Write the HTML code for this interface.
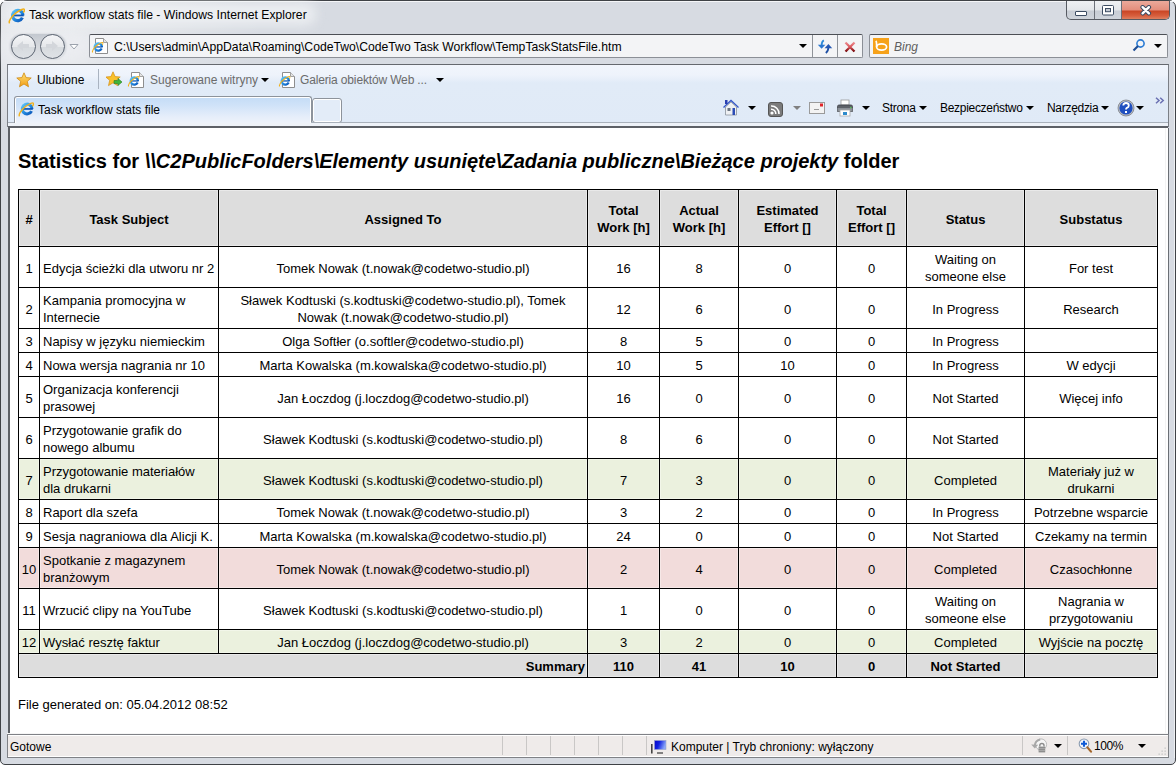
<!DOCTYPE html>
<html><head><meta charset="utf-8"><title>Task workflow stats file</title>
<style>
html,body{margin:0;padding:0;width:1176px;height:765px;overflow:hidden;background:#fff;}
body{position:relative;font-family:"Liberation Sans",sans-serif;font-size:12px;color:#000;}
.a{position:absolute;}
.t{position:absolute;white-space:nowrap;line-height:14px;}
#frame{position:absolute;left:0;top:0;width:1174px;height:763px;border:1px solid #3f4246;border-radius:7px 7px 5px 5px;
 background:radial-gradient(ellipse 220px 90px at 40px 35px,#e9ebee 0%,rgba(233,235,238,0.6) 50%,rgba(233,235,238,0) 100%),#d7dbe2;}
#frame::before{content:"";position:absolute;left:0;top:0;right:0;height:1px;background:#f5f6f8;border-radius:7px 7px 0 0;}
.cap{position:absolute;top:1px;height:18px;}
#content{position:absolute;left:10px;top:128px;width:1158px;height:605px;background:#fff;overflow:hidden;}
.c{position:absolute;white-space:nowrap;display:flex;align-items:center;justify-content:center;text-align:center;font-size:13px;line-height:17px;box-sizing:border-box;padding:0 3px;}
.c span{display:block;position:relative;top:1px;}
.c.l{justify-content:flex-start;text-align:left;padding-left:3px;}
.c.r{justify-content:flex-end;text-align:right;padding-right:2px;}
.c.b{font-weight:bold;}
.c.sh{box-shadow:inset 0 0 0 1px rgba(255,255,255,0.35);}
.gl{position:absolute;background:#000;}
.tri{position:absolute;width:0;height:0;border-left:4px solid transparent;border-right:4px solid transparent;border-top:4px solid #000;}
</style></head><body>
<div id="frame"></div>
<svg width="0" height="0" style="position:absolute">
<defs>
 <linearGradient id="eg" x1="0" y1="0" x2="1" y2="1"><stop offset="0" stop-color="#62c6f7"/><stop offset="0.55" stop-color="#2188de"/><stop offset="1" stop-color="#0b55b8"/></linearGradient>
 <symbol id="ie" viewBox="0 0 16 16">
   <path d="M13.54 10.07A4.9 4.9 0 1 1 14.0 8.0" stroke="url(#eg)" stroke-width="3" fill="none"/>
   <rect x="5.2" y="7.1" width="9.6" height="1.7" fill="#0e56b5"/>
   <path d="M1.6 15.3C0.1 14.0 2.9 9.0 7.9 5.3 11.9 2.4 14.9 1.2 15.4 2.4 15.7 3.1 15.2 4.2 14.4 5.2" fill="none" stroke="#f1b11a" stroke-width="1.4"/>
 </symbol>
 <symbol id="iepage" viewBox="0 0 17 17">
   <path d="M4.5 1.5H12.5L16.5 5.5V16.5H4.5Z" fill="#fff" stroke="#8e8e8e"/>
   <path d="M12.5 1.5V5.5H16.5" fill="#e4e4e4" stroke="#8e8e8e" stroke-width="0.8"/>
   <use href="#ie" x="0.5" y="4" width="12" height="12"/>
 </symbol>
</defs></svg>

<div class="a" style="left:6px;top:3px;width:310px;height:22px;border-radius:11px;background:rgba(240,242,245,0.85);filter:blur(6px);"></div>
<div class="a" style="left:2px;top:28px;width:90px;height:36px;border-radius:18px;background:rgba(236,238,241,0.8);filter:blur(8px);"></div>

<!-- title bar -->
<svg class="a" style="left:8px;top:7px" width="17" height="17"><use href="#ie" width="17" height="17"/></svg>
<div class="t" style="left:29px;top:8px;font-size:12.2px;">Task workflow stats file - Windows Internet Explorer</div>

<!-- caption buttons -->
<div class="a" style="left:1066px;top:1px;width:102px;height:18px;border:1px solid #565a62;border-top:none;border-radius:0 0 5px 5px;overflow:hidden;background:linear-gradient(#eef0f3 0,#e3e6ea 9px,#c8cdd5 10px,#d0d5dc 19px);">
 <div class="a" style="left:27px;top:0;width:1px;height:19px;background:#6c7079;"></div>
 <div class="a" style="left:54px;top:0;width:1px;height:19px;background:#6c7079;"></div>
 <div class="a" style="left:55px;top:0;width:47px;height:19px;background:linear-gradient(#eba99b 0,#e48e7c 9px,#c94524 10px,#d8603f 15px,#e08a6a 19px);"></div>
 <div class="a" style="left:8px;top:10px;width:10px;height:3px;border:1px solid #3d4d63;background:#fff;border-radius:1px;"></div>
 <svg class="a" style="left:35px;top:4px" width="13" height="11" viewBox="0 0 13 11"><rect x="0.5" y="0.5" width="11" height="9.5" rx="1" fill="#fff" stroke="#3d4d63"/><rect x="3.5" y="3.5" width="5" height="3.2" fill="#c3c9d2" stroke="#3d4d63"/></svg>
 <svg class="a" style="left:73px;top:4px" width="12" height="11" viewBox="0 0 12 11"><path d="M2.6 2.2L8.9 8.3M8.9 2.2L2.6 8.3" stroke="#3d4d63" stroke-width="4.4" stroke-linecap="round"/><path d="M2.6 2.2L8.9 8.3M8.9 2.2L2.6 8.3" stroke="#fff" stroke-width="2.4" stroke-linecap="round"/></svg>
</div>

<!-- nav buttons -->
<div class="a" style="left:10px;top:34px;width:56px;height:25px;border-radius:12px;background:linear-gradient(#c3c8cf,#d6d9de 50%,#dfe2e6);box-shadow:0 0 2px #c0c4ca;"></div>
<div class="a" style="left:11px;top:34px;width:23px;height:23px;border-radius:50%;border:1px solid #5d6572;background:linear-gradient(#f4f5f7,#e6e8eb 50%,#d6dade 51%,#dfe2e6);"></div>
<div class="a" style="left:40px;top:34px;width:23px;height:23px;border-radius:50%;border:1px solid #5d6572;background:linear-gradient(#f4f5f7,#e6e8eb 50%,#d6dade 51%,#dfe2e6);"></div>
<svg class="a" style="left:14px;top:38px" width="18" height="16" viewBox="0 0 18 16"><path d="M3 8L9 3V6H15V10H9V13Z" fill="#d3d6db"/></svg>
<svg class="a" style="left:43px;top:38px" width="18" height="16" viewBox="0 0 18 16"><path d="M15 8L9 3V6H3V10H9V13Z" fill="#d3d6db"/></svg>
<svg class="a" style="left:69px;top:44px" width="10" height="6" viewBox="0 0 10 6"><path d="M1 0.5H9L5 5Z" fill="#fff" stroke="#9ca3ad" stroke-width="1"/></svg>

<!-- address box -->
<div class="a" style="left:89px;top:34px;width:772px;height:22px;border:1px solid #8b8f96;border-top-color:#4c4f55;border-radius:2px;background:#f3f4f6;"></div>
<div class="a" style="left:812px;top:35px;width:1px;height:22px;background:#8f9399;"></div>
<div class="a" style="left:837px;top:35px;width:1px;height:22px;background:#8f9399;"></div>
<svg class="a" style="left:91px;top:37px" width="17" height="17"><use href="#iepage" width="17" height="17"/></svg>
<div class="t" style="left:114px;top:40px;font-size:12.2px;">C:\Users\admin\AppData\Roaming\CodeTwo\CodeTwo Task Workflow\TempTaskStatsFile.htm</div>
<div class="tri" style="left:799px;top:44px;"></div>
<svg class="a" style="left:816px;top:38px" width="18" height="17" viewBox="0 0 18 17">
 <path d="M7.8 2.3Q5.6 3.6 5.6 7.6" fill="none" stroke="#2c8ad9" stroke-width="1.8"/>
 <path d="M1.8 6.8H9.4L5.6 10.8Z" fill="#2a76cf"/>
 <path d="M12.4 9.2Q12.4 13.2 9.8 15" fill="none" stroke="#1d4ea3" stroke-width="1.8"/>
 <path d="M8.6 10.2H16.2L12.4 6Z" fill="#2457b3"/>
</svg>
<svg class="a" style="left:844px;top:41px" width="12" height="12" viewBox="0 0 12 12"><defs><linearGradient id="xg" x1="0" y1="0" x2="0" y2="1"><stop offset="0" stop-color="#ec8a8e"/><stop offset="0.5" stop-color="#d9545a"/><stop offset="1" stop-color="#750508"/></linearGradient></defs><path d="M1.5 1.5L10.5 10.5M10.5 1.5L1.5 10.5" stroke="url(#xg)" stroke-width="2.3"/></svg>

<!-- search box -->
<div class="a" style="left:869px;top:34px;width:297px;height:22px;border:1px solid #8b8f96;border-top-color:#4c4f55;border-radius:2px;background:#f3f4f6;"></div>
<div class="a" style="left:873px;top:38px;width:16px;height:16px;background:#f6a21b;"></div>
<svg class="a" style="left:873px;top:38px" width="16" height="16" viewBox="0 0 16 16"><path d="M2.8 2.8Q3.6 3.6 3.6 6V9" fill="none" stroke="#fff" stroke-width="1.7"/><ellipse cx="8.6" cy="9" rx="5" ry="3.1" fill="none" stroke="#fff" stroke-width="1.7"/></svg>
<div class="t" style="left:894px;top:40px;font-size:12px;font-style:italic;color:#5f5f5f;">Bing</div>
<svg class="a" style="left:1132px;top:38px" width="14" height="14" viewBox="0 0 14 14"><circle cx="8.5" cy="5.5" r="3.6" fill="none" stroke="#2a7bd4" stroke-width="1.6"/><path d="M6 8L1.5 12.5" stroke="#1d4d94" stroke-width="2.2"/></svg>
<div class="tri" style="left:1154px;top:44px;"></div>

<!-- command bar -->
<div class="a" style="left:7px;top:64px;width:1160px;height:62px;border:1px solid #7b7f86;border-bottom:none;border-top-color:#65686e;background:linear-gradient(#f1f5fc 0,#eef3fb 10px,#e1ebf7 18px,#e0eaf7 100%);"></div>
<!-- favorites row -->
<svg class="a" style="left:16px;top:72px" width="16" height="16" viewBox="0 0 16 16"><defs><linearGradient id="sg" x1="0" y1="0" x2="0" y2="1"><stop offset="0" stop-color="#fde27a"/><stop offset="1" stop-color="#f39c12"/></linearGradient></defs><path d="M8 0.8L10.1 5.6 15.2 6 11.3 9.3 12.5 14.8 8 12 3.5 14.8 4.7 9.3 0.8 6 5.9 5.6Z" fill="url(#sg)" stroke="#d08a12" stroke-width="0.8" stroke-linejoin="round"/></svg>
<div class="t" style="left:37px;top:73px;font-size:12px;">Ulubione</div>
<div class="a" style="left:98px;top:69px;width:1px;height:20px;background:#a9b3c0;"></div>
<svg class="a" style="left:106px;top:71px" width="17" height="16" viewBox="0 0 17 16"><path d="M7 0.8L9.1 5.6 14.2 6 10.3 9.3 11.5 14.6 7 11.8 2.5 14.6 3.7 9.3 -0.2 6 4.9 5.6Z" fill="#f8c12c" stroke="#d58d10" stroke-width="0.7"/><path d="M8 9.5H12V7.5L16 11 12 14.5V12.5H8Z" fill="#3fb63a" stroke="#2a7d27" stroke-width="0.6"/></svg>
<svg class="a" style="left:127px;top:71px" width="17" height="17"><use href="#iepage" width="17" height="17"/></svg>
<div class="t" style="left:150px;top:73px;font-size:12px;color:#6b6b6b;">Sugerowane witryny</div>
<div class="tri" style="left:261px;top:78px;"></div>
<svg class="a" style="left:278px;top:71px" width="17" height="17"><use href="#iepage" width="17" height="17"/></svg>
<div class="t" style="left:300px;top:73px;font-size:12px;color:#6b6b6b;letter-spacing:-0.15px;">Galeria obiektów Web ...</div>
<div class="tri" style="left:436px;top:78px;"></div>

<!-- tabs -->
<div class="a" style="left:14px;top:96px;width:296px;height:27px;border:1px solid #8d939b;border-bottom:none;border-radius:3px 3px 0 0;background:linear-gradient(#c4dcf6 0,#cfe2f8 8px,#e6eefa 20px,#eff3fa 27px);box-shadow:inset 0 1px 0 #fff,inset 1px 0 0 #fff,inset -1px 0 0 #fff;"></div>
<svg class="a" style="left:18px;top:101px" width="16" height="16"><use href="#ie" width="16" height="16"/></svg>
<div class="t" style="left:38px;top:103px;font-size:12px;">Task workflow stats file</div>
<div class="a" style="left:312px;top:98px;width:28px;height:23px;border:1px solid #8d939b;border-radius:3px;background:#e3ecf8;box-shadow:inset 0 0 0 1px #fff;"></div>
<div class="a" style="left:8px;top:122px;width:6px;height:1px;background:#a9b1bb;"></div><div class="a" style="left:311px;top:122px;width:857px;height:1px;background:#a9b1bb;"></div>
<div class="a" style="left:8px;top:123px;width:1160px;height:3px;background:#eef2f8;"></div>
<div class="a" style="left:8px;top:126px;width:1160px;height:2px;background:#5d6066;"></div>

<!-- command icons -->
<svg class="a" style="left:722px;top:99px" width="18" height="17" viewBox="0 0 18 17">
 <path d="M1.5 8.5L9 1.5 16.5 8.5" fill="none" stroke="#3355c8" stroke-width="1.3"/>
 <path d="M3.5 8V16H14.5V8L9 3Z" fill="#eef0f3" stroke="#8a929c" stroke-width="0.8"/>
 <rect x="3" y="1" width="2.5" height="4" fill="#2a3fb0"/>
 <rect x="5.5" y="9" width="3" height="3" fill="#6a7482"/>
 <rect x="10.5" y="9" width="2.5" height="7" fill="#2b4cb5"/>
</svg>
<div class="tri" style="left:748px;top:106px;"></div>
<svg class="a" style="left:768px;top:102px" width="15" height="15" viewBox="0 0 15 15">
 <rect x="0.5" y="0.5" width="14" height="14" rx="2.5" fill="#7b7b7b" stroke="#555"/>
 <circle cx="4" cy="11" r="1.6" fill="#fff"/>
 <path d="M3 7.2A4.5 4.5 0 0 1 7.8 12M3 4A7.6 7.6 0 0 1 11 12" fill="none" stroke="#fff" stroke-width="1.6"/>
</svg>
<div class="tri" style="left:793px;top:106px;border-top-color:#808080;"></div>
<svg class="a" style="left:809px;top:102px" width="16" height="12" viewBox="0 0 16 12">
 <rect x="0.5" y="0.5" width="15" height="11" fill="#f3f3f3" stroke="#9a9a9a"/>
 <rect x="11" y="1.5" width="3" height="3" fill="#e0242a"/>
 <rect x="5" y="7" width="5" height="1" fill="#9a9a9a"/>
</svg>
<svg class="a" style="left:836px;top:99px" width="18" height="18" viewBox="0 0 18 18">
 <rect x="5" y="1" width="8" height="5" fill="#fff" stroke="#999" stroke-width="0.8"/>
 <path d="M1.5 7.5Q1.5 6 3 6H15Q16.5 6 16.5 7.5V12.5H1.5Z" fill="#5d6168" stroke="#3d4046" stroke-width="0.8"/>
 <rect x="1.5" y="9" width="15" height="3.5" fill="#8a8f96"/>
 <rect x="4" y="11" width="10" height="6" fill="#fff" stroke="#aaa" stroke-width="0.8"/>
 <rect x="7" y="13" width="4" height="3" fill="#2e8bcc"/>
 <rect x="14" y="8" width="1.5" height="1.2" fill="#4fc24a"/>
</svg>
<div class="tri" style="left:862px;top:106px;"></div>
<div class="t" style="left:882px;top:101px;font-size:12px;letter-spacing:-0.3px;">Strona</div>
<div class="tri" style="left:919px;top:106px;"></div>
<div class="t" style="left:940px;top:101px;font-size:12px;letter-spacing:-0.3px;">Bezpieczeństwo</div>
<div class="tri" style="left:1026px;top:106px;"></div>
<div class="t" style="left:1047px;top:101px;font-size:12px;letter-spacing:-0.3px;">Narzędzia</div>
<div class="tri" style="left:1101px;top:106px;"></div>
<svg class="a" style="left:1117px;top:99px" width="18" height="18" viewBox="0 0 18 18">
 <circle cx="9" cy="9" r="8" fill="#b9bcc2" stroke="#7b7f87" stroke-width="0.8"/>
 <circle cx="9" cy="9" r="6.6" fill="#1f4fc0"/>
 <path d="M6.3 6.6Q6.3 4 9 4 11.8 4 11.8 6.4 11.8 8 9.9 8.8 9 9.3 9 10.6" fill="none" stroke="#fff" stroke-width="1.8"/>
 <rect x="8" y="12" width="2" height="2" fill="#fff"/>
</svg>
<div class="tri" style="left:1136px;top:106px;"></div>
<svg class="a" style="left:1155px;top:97px" width="10" height="7" viewBox="0 0 10 7"><path d="M1 0.8L4 3.5 1 6.2M5.2 0.8L8.2 3.5 5.2 6.2" fill="none" stroke="#6a70b2" stroke-width="1.5"/></svg>

<!-- content -->
<div class="a" style="left:8px;top:128px;width:2px;height:606px;background:#5d6066;"></div>
<div id="content"></div>
<div class="a" style="left:1165px;top:128px;width:1px;height:606px;background:#f3f3f3;"></div><div class="a" style="left:1174px;top:20px;width:1px;height:738px;background:#eef0f3;"></div>
<div class="a" style="left:1168px;top:128px;width:1px;height:606px;background:#6b6f75;"></div>
<div class="t" style="left:18px;top:150px;font-size:20px;line-height:22px;font-weight:bold;">Statistics for <i>\\C2PublicFolders\Elementy usunięte\Zadania publiczne\Bieżące projekty</i> folder</div>
<div class="c sh b" style="left:19px;top:190px;width:20px;height:56px;background:#dddddd;"><span>#</span></div>
<div class="c sh b" style="left:40px;top:190px;width:178px;height:56px;background:#dddddd;"><span>Task Subject</span></div>
<div class="c sh b" style="left:219px;top:190px;width:368px;height:56px;background:#dddddd;"><span>Assigned To</span></div>
<div class="c sh b" style="left:588px;top:190px;width:71px;height:56px;background:#dddddd;"><span>Total<br>Work [h]</span></div>
<div class="c sh b" style="left:660px;top:190px;width:78px;height:56px;background:#dddddd;"><span>Actual<br>Work [h]</span></div>
<div class="c sh b" style="left:739px;top:190px;width:97px;height:56px;background:#dddddd;"><span>Estimated<br>Effort []</span></div>
<div class="c sh b" style="left:837px;top:190px;width:69px;height:56px;background:#dddddd;"><span>Total<br>Effort []</span></div>
<div class="c sh b" style="left:907px;top:190px;width:117px;height:56px;background:#dddddd;"><span>Status</span></div>
<div class="c sh b" style="left:1025px;top:190px;width:132px;height:56px;background:#dddddd;"><span>Substatus</span></div>
<div class="c" style="left:19px;top:247px;width:20px;height:40px;"><span>1</span></div>
<div class="c l" style="left:40px;top:247px;width:178px;height:40px;"><span>Edycja ścieżki dla utworu nr 2</span></div>
<div class="c" style="left:219px;top:247px;width:368px;height:40px;"><span>Tomek Nowak (t.nowak@codetwo-studio.pl)</span></div>
<div class="c" style="left:588px;top:247px;width:71px;height:40px;"><span>16</span></div>
<div class="c" style="left:660px;top:247px;width:78px;height:40px;"><span>8</span></div>
<div class="c" style="left:739px;top:247px;width:97px;height:40px;"><span>0</span></div>
<div class="c" style="left:837px;top:247px;width:69px;height:40px;"><span>0</span></div>
<div class="c" style="left:907px;top:247px;width:117px;height:40px;"><span>Waiting on<br>someone else</span></div>
<div class="c" style="left:1025px;top:247px;width:132px;height:40px;"><span>For test</span></div>
<div class="c" style="left:19px;top:288px;width:20px;height:40px;"><span>2</span></div>
<div class="c l" style="left:40px;top:288px;width:178px;height:40px;"><span>Kampania promocyjna w<br>Internecie</span></div>
<div class="c" style="left:219px;top:288px;width:368px;height:40px;"><span>Sławek Kodtuski (s.kodtuski@codetwo-studio.pl), Tomek<br>Nowak (t.nowak@codetwo-studio.pl)</span></div>
<div class="c" style="left:588px;top:288px;width:71px;height:40px;"><span>12</span></div>
<div class="c" style="left:660px;top:288px;width:78px;height:40px;"><span>6</span></div>
<div class="c" style="left:739px;top:288px;width:97px;height:40px;"><span>0</span></div>
<div class="c" style="left:837px;top:288px;width:69px;height:40px;"><span>0</span></div>
<div class="c" style="left:907px;top:288px;width:117px;height:40px;"><span>In Progress</span></div>
<div class="c" style="left:1025px;top:288px;width:132px;height:40px;"><span>Research</span></div>
<div class="c" style="left:19px;top:329px;width:20px;height:23px;"><span>3</span></div>
<div class="c l" style="left:40px;top:329px;width:178px;height:23px;"><span>Napisy w języku niemieckim</span></div>
<div class="c" style="left:219px;top:329px;width:368px;height:23px;"><span>Olga Softłer (o.softler@codetwo-studio.pl)</span></div>
<div class="c" style="left:588px;top:329px;width:71px;height:23px;"><span>8</span></div>
<div class="c" style="left:660px;top:329px;width:78px;height:23px;"><span>5</span></div>
<div class="c" style="left:739px;top:329px;width:97px;height:23px;"><span>0</span></div>
<div class="c" style="left:837px;top:329px;width:69px;height:23px;"><span>0</span></div>
<div class="c" style="left:907px;top:329px;width:117px;height:23px;"><span>In Progress</span></div>
<div class="c" style="left:1025px;top:329px;width:132px;height:23px;"><span></span></div>
<div class="c" style="left:19px;top:353px;width:20px;height:23px;"><span>4</span></div>
<div class="c l" style="left:40px;top:353px;width:178px;height:23px;"><span>Nowa wersja nagrania nr 10</span></div>
<div class="c" style="left:219px;top:353px;width:368px;height:23px;"><span>Marta Kowalska (m.kowalska@codetwo-studio.pl)</span></div>
<div class="c" style="left:588px;top:353px;width:71px;height:23px;"><span>10</span></div>
<div class="c" style="left:660px;top:353px;width:78px;height:23px;"><span>5</span></div>
<div class="c" style="left:739px;top:353px;width:97px;height:23px;"><span>10</span></div>
<div class="c" style="left:837px;top:353px;width:69px;height:23px;"><span>0</span></div>
<div class="c" style="left:907px;top:353px;width:117px;height:23px;"><span>In Progress</span></div>
<div class="c" style="left:1025px;top:353px;width:132px;height:23px;"><span>W edycji</span></div>
<div class="c" style="left:19px;top:377px;width:20px;height:40px;"><span>5</span></div>
<div class="c l" style="left:40px;top:377px;width:178px;height:40px;"><span>Organizacja konferencji<br>prasowej</span></div>
<div class="c" style="left:219px;top:377px;width:368px;height:40px;"><span>Jan Łoczdog (j.loczdog@codetwo-studio.pl)</span></div>
<div class="c" style="left:588px;top:377px;width:71px;height:40px;"><span>16</span></div>
<div class="c" style="left:660px;top:377px;width:78px;height:40px;"><span>0</span></div>
<div class="c" style="left:739px;top:377px;width:97px;height:40px;"><span>0</span></div>
<div class="c" style="left:837px;top:377px;width:69px;height:40px;"><span>0</span></div>
<div class="c" style="left:907px;top:377px;width:117px;height:40px;"><span>Not Started</span></div>
<div class="c" style="left:1025px;top:377px;width:132px;height:40px;"><span>Więcej info</span></div>
<div class="c" style="left:19px;top:418px;width:20px;height:40px;"><span>6</span></div>
<div class="c l" style="left:40px;top:418px;width:178px;height:40px;"><span>Przygotowanie grafik do<br>nowego albumu</span></div>
<div class="c" style="left:219px;top:418px;width:368px;height:40px;"><span>Sławek Kodtuski (s.kodtuski@codetwo-studio.pl)</span></div>
<div class="c" style="left:588px;top:418px;width:71px;height:40px;"><span>8</span></div>
<div class="c" style="left:660px;top:418px;width:78px;height:40px;"><span>6</span></div>
<div class="c" style="left:739px;top:418px;width:97px;height:40px;"><span>0</span></div>
<div class="c" style="left:837px;top:418px;width:69px;height:40px;"><span>0</span></div>
<div class="c" style="left:907px;top:418px;width:117px;height:40px;"><span>Not Started</span></div>
<div class="c" style="left:1025px;top:418px;width:132px;height:40px;"><span></span></div>
<div class="c sh" style="left:19px;top:459px;width:20px;height:40px;background:#ebf1de;"><span>7</span></div>
<div class="c sh l" style="left:40px;top:459px;width:178px;height:40px;background:#ebf1de;"><span>Przygotowanie materiałów<br>dla drukarni</span></div>
<div class="c sh" style="left:219px;top:459px;width:368px;height:40px;background:#ebf1de;"><span>Sławek Kodtuski (s.kodtuski@codetwo-studio.pl)</span></div>
<div class="c sh" style="left:588px;top:459px;width:71px;height:40px;background:#ebf1de;"><span>7</span></div>
<div class="c sh" style="left:660px;top:459px;width:78px;height:40px;background:#ebf1de;"><span>3</span></div>
<div class="c sh" style="left:739px;top:459px;width:97px;height:40px;background:#ebf1de;"><span>0</span></div>
<div class="c sh" style="left:837px;top:459px;width:69px;height:40px;background:#ebf1de;"><span>0</span></div>
<div class="c sh" style="left:907px;top:459px;width:117px;height:40px;background:#ebf1de;"><span>Completed</span></div>
<div class="c sh" style="left:1025px;top:459px;width:132px;height:40px;background:#ebf1de;"><span>Materiały już w<br>drukarni</span></div>
<div class="c" style="left:19px;top:500px;width:20px;height:23px;"><span>8</span></div>
<div class="c l" style="left:40px;top:500px;width:178px;height:23px;"><span>Raport dla szefa</span></div>
<div class="c" style="left:219px;top:500px;width:368px;height:23px;"><span>Tomek Nowak (t.nowak@codetwo-studio.pl)</span></div>
<div class="c" style="left:588px;top:500px;width:71px;height:23px;"><span>3</span></div>
<div class="c" style="left:660px;top:500px;width:78px;height:23px;"><span>2</span></div>
<div class="c" style="left:739px;top:500px;width:97px;height:23px;"><span>0</span></div>
<div class="c" style="left:837px;top:500px;width:69px;height:23px;"><span>0</span></div>
<div class="c" style="left:907px;top:500px;width:117px;height:23px;"><span>In Progress</span></div>
<div class="c" style="left:1025px;top:500px;width:132px;height:23px;"><span>Potrzebne wsparcie</span></div>
<div class="c" style="left:19px;top:524px;width:20px;height:23px;"><span>9</span></div>
<div class="c l" style="left:40px;top:524px;width:178px;height:23px;"><span>Sesja nagraniowa dla Alicji K.</span></div>
<div class="c" style="left:219px;top:524px;width:368px;height:23px;"><span>Marta Kowalska (m.kowalska@codetwo-studio.pl)</span></div>
<div class="c" style="left:588px;top:524px;width:71px;height:23px;"><span>24</span></div>
<div class="c" style="left:660px;top:524px;width:78px;height:23px;"><span>0</span></div>
<div class="c" style="left:739px;top:524px;width:97px;height:23px;"><span>0</span></div>
<div class="c" style="left:837px;top:524px;width:69px;height:23px;"><span>0</span></div>
<div class="c" style="left:907px;top:524px;width:117px;height:23px;"><span>Not Started</span></div>
<div class="c" style="left:1025px;top:524px;width:132px;height:23px;"><span>Czekamy na termin</span></div>
<div class="c sh" style="left:19px;top:548px;width:20px;height:40px;background:#f2dcdb;"><span>10</span></div>
<div class="c sh l" style="left:40px;top:548px;width:178px;height:40px;background:#f2dcdb;"><span>Spotkanie z magazynem<br>branżowym</span></div>
<div class="c sh" style="left:219px;top:548px;width:368px;height:40px;background:#f2dcdb;"><span>Tomek Nowak (t.nowak@codetwo-studio.pl)</span></div>
<div class="c sh" style="left:588px;top:548px;width:71px;height:40px;background:#f2dcdb;"><span>2</span></div>
<div class="c sh" style="left:660px;top:548px;width:78px;height:40px;background:#f2dcdb;"><span>4</span></div>
<div class="c sh" style="left:739px;top:548px;width:97px;height:40px;background:#f2dcdb;"><span>0</span></div>
<div class="c sh" style="left:837px;top:548px;width:69px;height:40px;background:#f2dcdb;"><span>0</span></div>
<div class="c sh" style="left:907px;top:548px;width:117px;height:40px;background:#f2dcdb;"><span>Completed</span></div>
<div class="c sh" style="left:1025px;top:548px;width:132px;height:40px;background:#f2dcdb;"><span>Czasochłonne</span></div>
<div class="c" style="left:19px;top:589px;width:20px;height:40px;"><span>11</span></div>
<div class="c l" style="left:40px;top:589px;width:178px;height:40px;"><span>Wrzucić clipy na YouTube</span></div>
<div class="c" style="left:219px;top:589px;width:368px;height:40px;"><span>Sławek Kodtuski (s.kodtuski@codetwo-studio.pl)</span></div>
<div class="c" style="left:588px;top:589px;width:71px;height:40px;"><span>1</span></div>
<div class="c" style="left:660px;top:589px;width:78px;height:40px;"><span>0</span></div>
<div class="c" style="left:739px;top:589px;width:97px;height:40px;"><span>0</span></div>
<div class="c" style="left:837px;top:589px;width:69px;height:40px;"><span>0</span></div>
<div class="c" style="left:907px;top:589px;width:117px;height:40px;"><span>Waiting on<br>someone else</span></div>
<div class="c" style="left:1025px;top:589px;width:132px;height:40px;"><span>Nagrania w<br>przygotowaniu</span></div>
<div class="c sh" style="left:19px;top:630px;width:20px;height:23px;background:#ebf1de;"><span>12</span></div>
<div class="c sh l" style="left:40px;top:630px;width:178px;height:23px;background:#ebf1de;"><span>Wysłać resztę faktur</span></div>
<div class="c sh" style="left:219px;top:630px;width:368px;height:23px;background:#ebf1de;"><span>Jan Łoczdog (j.loczdog@codetwo-studio.pl)</span></div>
<div class="c sh" style="left:588px;top:630px;width:71px;height:23px;background:#ebf1de;"><span>3</span></div>
<div class="c sh" style="left:660px;top:630px;width:78px;height:23px;background:#ebf1de;"><span>2</span></div>
<div class="c sh" style="left:739px;top:630px;width:97px;height:23px;background:#ebf1de;"><span>0</span></div>
<div class="c sh" style="left:837px;top:630px;width:69px;height:23px;background:#ebf1de;"><span>0</span></div>
<div class="c sh" style="left:907px;top:630px;width:117px;height:23px;background:#ebf1de;"><span>Completed</span></div>
<div class="c sh" style="left:1025px;top:630px;width:132px;height:23px;background:#ebf1de;"><span>Wyjście na pocztę</span></div>
<div class="c sh b r" style="left:19px;top:654px;width:568px;height:23px;background:#dddddd;"><span>Summary</span></div>
<div class="c sh b" style="left:588px;top:654px;width:71px;height:23px;background:#dddddd;"><span>110</span></div>
<div class="c sh b" style="left:660px;top:654px;width:78px;height:23px;background:#dddddd;"><span>41</span></div>
<div class="c sh b" style="left:739px;top:654px;width:97px;height:23px;background:#dddddd;"><span>10</span></div>
<div class="c sh b" style="left:837px;top:654px;width:69px;height:23px;background:#dddddd;"><span>0</span></div>
<div class="c sh b" style="left:907px;top:654px;width:117px;height:23px;background:#dddddd;"><span>Not Started</span></div>
<div class="c sh b" style="left:1025px;top:654px;width:132px;height:23px;background:#dddddd;"><span></span></div>
<div class="gl" style="left:18px;top:189px;width:1px;height:489px"></div>
<div class="gl" style="left:39px;top:189px;width:1px;height:465px"></div>
<div class="gl" style="left:218px;top:189px;width:1px;height:465px"></div>
<div class="gl" style="left:587px;top:189px;width:1px;height:489px"></div>
<div class="gl" style="left:659px;top:189px;width:1px;height:489px"></div>
<div class="gl" style="left:738px;top:189px;width:1px;height:489px"></div>
<div class="gl" style="left:836px;top:189px;width:1px;height:489px"></div>
<div class="gl" style="left:906px;top:189px;width:1px;height:489px"></div>
<div class="gl" style="left:1024px;top:189px;width:1px;height:489px"></div>
<div class="gl" style="left:1157px;top:189px;width:1px;height:489px"></div>
<div class="gl" style="left:18px;top:189px;width:1140px;height:1px"></div>
<div class="gl" style="left:18px;top:246px;width:1140px;height:1px"></div>
<div class="gl" style="left:18px;top:287px;width:1140px;height:1px"></div>
<div class="gl" style="left:18px;top:328px;width:1140px;height:1px"></div>
<div class="gl" style="left:18px;top:352px;width:1140px;height:1px"></div>
<div class="gl" style="left:18px;top:376px;width:1140px;height:1px"></div>
<div class="gl" style="left:18px;top:417px;width:1140px;height:1px"></div>
<div class="gl" style="left:18px;top:458px;width:1140px;height:1px"></div>
<div class="gl" style="left:18px;top:499px;width:1140px;height:1px"></div>
<div class="gl" style="left:18px;top:523px;width:1140px;height:1px"></div>
<div class="gl" style="left:18px;top:547px;width:1140px;height:1px"></div>
<div class="gl" style="left:18px;top:588px;width:1140px;height:1px"></div>
<div class="gl" style="left:18px;top:629px;width:1140px;height:1px"></div>
<div class="gl" style="left:18px;top:653px;width:1140px;height:1px"></div>
<div class="gl" style="left:18px;top:677px;width:1140px;height:1px"></div>
<div class="t" style="left:18px;top:698px;font-size:13px;">File generated on: 05.04.2012 08:52</div>

<!-- status bar -->
<div class="a" style="left:7px;top:733px;width:1161px;height:1px;background:#f6f6f6;"></div>
<div class="a" style="left:7px;top:734px;width:1160px;height:22px;border:1px solid #7f8186;background:#efebea;box-shadow:inset 0 1px 0 #fff,inset 0 -1px 0 #fff;"></div>
<div class="t" style="left:10px;top:740px;font-size:12px;">Gotowe</div>
<div class="a" style="left:502px;top:736px;width:1px;height:19px;background:#c9c7c6;"></div>
<div class="a" style="left:526px;top:736px;width:1px;height:19px;background:#c9c7c6;"></div>
<div class="a" style="left:550px;top:736px;width:1px;height:19px;background:#c9c7c6;"></div>
<div class="a" style="left:574px;top:736px;width:1px;height:19px;background:#c9c7c6;"></div>
<div class="a" style="left:598px;top:736px;width:1px;height:19px;background:#c9c7c6;"></div>
<div class="a" style="left:622px;top:736px;width:1px;height:19px;background:#c9c7c6;"></div>
<div class="a" style="left:646px;top:736px;width:1px;height:19px;background:#c9c7c6;"></div>
<svg class="a" style="left:650px;top:739px" width="18" height="16" viewBox="0 0 18 16">
 <defs><linearGradient id="mg" x1="0" y1="0" x2="1" y2="0.3"><stop offset="0" stop-color="#0606c8"/><stop offset="0.45" stop-color="#1020e0"/><stop offset="1" stop-color="#8aa6f8"/></linearGradient></defs>
 <rect x="1" y="5" width="1.6" height="9.5" fill="#444"/>
 <rect x="4.5" y="1.5" width="11.5" height="9" fill="url(#mg)" stroke="#9aa0c8" stroke-width="0.6"/>
 <rect x="7" y="13.3" width="6" height="1.4" fill="#555"/>
</svg>
<div class="t" style="left:671px;top:740px;font-size:12px;">Komputer | Tryb chroniony: wyłączony</div>
<div class="a" style="left:1022px;top:736px;width:1px;height:19px;background:#c9c7c6;"></div>
<div class="a" style="left:1067px;top:736px;width:1px;height:19px;background:#c9c7c6;"></div>
<svg class="a" style="left:1030px;top:738px" width="18" height="16" viewBox="0 0 18 16">
 <circle cx="11" cy="6.5" r="5.6" fill="#f6f6f6" stroke="#b5b5b5" stroke-width="0.9"/>
 <path d="M10.2 1.5Q5 2.5 4.8 8" fill="none" stroke="#a8a8a8" stroke-width="2"/>
 <path d="M1.2 6.5L4.8 10.5 8.2 6.8" fill="#a8a8a8"/>
 <path d="M9.8 8.6V7.6A2.1 2.1 0 0 1 14 7.6V8.6" fill="none" stroke="#8c8c8c" stroke-width="1.4"/>
 <rect x="8.6" y="8.6" width="6.6" height="5.8" fill="#8e8e8e"/>
 <path d="M8.6 10.5H15.2M8.6 12.5H15.2" stroke="#b8b8b8" stroke-width="0.6"/>
</svg>
<div class="tri" style="left:1054px;top:744px;"></div>
<svg class="a" style="left:1078px;top:738px" width="15" height="16" viewBox="0 0 15 16">
 <circle cx="6" cy="5.8" r="4.8" fill="#f4f7fb" stroke="#8a9bb0" stroke-width="1.1"/>
 <path d="M6 2.8V8.8M3 5.8H9" stroke="#0d5ad6" stroke-width="2.1"/>
 <path d="M9.4 9.4L13 13.6" stroke="#a4662a" stroke-width="2.2" stroke-linecap="round"/>
</svg>
<div class="t" style="left:1094px;top:739px;font-size:12px;letter-spacing:-0.4px;">100%</div>
<div class="tri" style="left:1138px;top:744px;"></div>
<svg class="a" style="left:1157px;top:746px" width="10" height="10" viewBox="0 0 10 10"><g fill="#c4c4c4"><rect x="7.5" y="1.5" width="1.3" height="1.3"/><rect x="4.5" y="4.5" width="1.3" height="1.3"/><rect x="7.5" y="4.5" width="1.3" height="1.3"/><rect x="1.5" y="7.5" width="1.3" height="1.3"/><rect x="4.5" y="7.5" width="1.3" height="1.3"/><rect x="7.5" y="7.5" width="1.3" height="1.3"/></g></svg>
</body></html>
